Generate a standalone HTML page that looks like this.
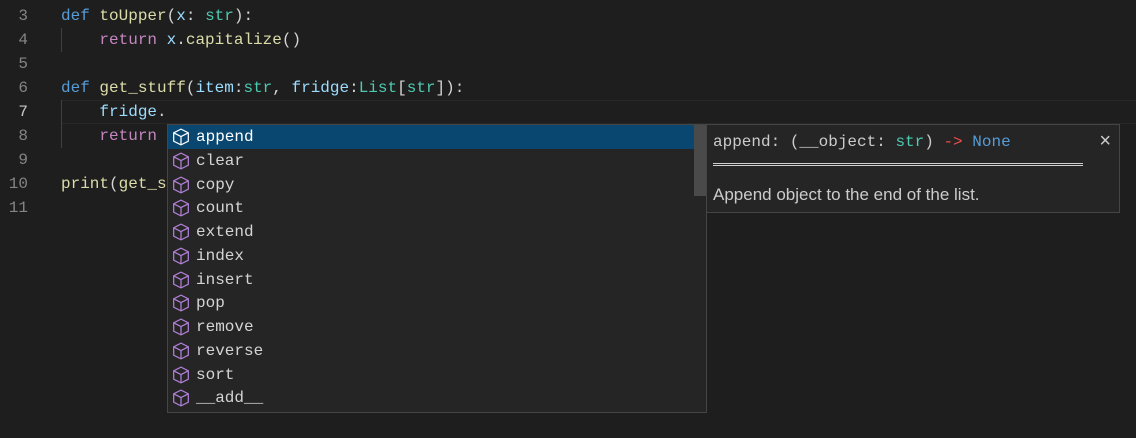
<!DOCTYPE html>
<html><head><style>
body{margin:0;width:1136px;height:438px;background:#1e1e1e;overflow:hidden;position:relative;font-family:"Liberation Mono",monospace;font-size:16px;}
.ln{position:absolute;left:0;width:28px;text-align:right;color:#858585;line-height:24px;}
.cl{position:absolute;left:61px;color:#d4d4d4;line-height:24px;white-space:pre;}
.k{color:#569cd6}.f{color:#dcdcaa}.t{color:#4ec9b0}.p{color:#9cdcfe}.r{color:#c586c0}
.guide{position:absolute;left:61px;width:1px;background:#404040}
#cur{position:absolute;left:61px;right:0;top:100px;height:22px;border-top:1px solid #282828;border-bottom:1px solid #282828}
#sug{position:absolute;left:167px;top:124px;width:538px;height:287px;background:#252526;border:1px solid #454545}
.it{position:absolute;left:0;width:538px;height:24px;line-height:24px;color:#d4d4d4}
.it svg{position:absolute;left:4px;top:3px}
.it span{position:absolute;left:28px}
.sel{background:#094771;color:#fff}
#sb{position:absolute;left:526px;top:0;width:12px;height:71px;background:#4a4a4a}
#det{position:absolute;left:707px;top:124px;width:412px;height:87px;background:#252526;border:1px solid #454545;border-left:none}
</style></head><body>
<div id="cur"></div>
<div class="guide" style="top:28px;height:24px"></div>
<div class="guide" style="top:100px;height:48px"></div>
<div class="ln" style="top:4px">3</div>
<div class="ln" style="top:28px">4</div>
<div class="ln" style="top:52px">5</div>
<div class="ln" style="top:76px">6</div>
<div class="ln" style="top:100px;color:#c6c6c6">7</div>
<div class="ln" style="top:124px">8</div>
<div class="ln" style="top:148px">9</div>
<div class="ln" style="top:172px">10</div>
<div class="ln" style="top:196px">11</div>
<div class="cl" style="top:4px"><span class="k">def</span> <span class="f">toUpper</span>(<span class="p">x</span>: <span class="t">str</span>):</div>
<div class="cl" style="top:28px">    <span class="r">return</span> <span class="p">x</span>.<span class="f">capitalize</span>()</div>
<div class="cl" style="top:76px"><span class="k">def</span> <span class="f">get_stuff</span>(<span class="p">item</span>:<span class="t">str</span>, <span class="p">fridge</span>:<span class="t">List</span>[<span class="t">str</span>]):</div>
<div class="cl" style="top:100px">    <span class="p">fridge</span>.</div>
<div class="cl" style="top:124px">    <span class="r">return</span></div>
<div class="cl" style="top:172px"><span class="f">print</span>(<span class="f">get_s</span></div>
<div id="sug">
<div id="sb"></div>
</div>
<div id="det">
<div style="position:absolute;left:6px;top:6px;color:#cccccc;line-height:22px;white-space:pre">append: (__object: <span class="t">str</span>) <span style="color:#f14c4c">-&gt;</span> <span class="k">None</span></div>
<div style="position:absolute;right:8px;top:5px;color:#cccccc;font-family:'Liberation Sans',sans-serif;font-size:20px;line-height:22px">×</div>
<div style="position:absolute;left:6px;top:38px;width:370px;height:1px;border-top:1px solid #cfcfcf;border-bottom:1px solid #cfcfcf"></div>
<div style="position:absolute;left:6px;top:58px;color:#cccccc;font-family:'Liberation Sans',sans-serif;font-size:17px;line-height:24px">Append object to the end of the list.</div>
</div>
<script>
var n=["append","clear","copy","count","extend","index","insert","pop","remove","reverse","sort","__add__"];
var s=document.getElementById('sug'),h='';
n.forEach(function(w,i){var c=i==0?'#ffffff':'#b180d7';
h+='<div class="it'+(i==0?' sel':'')+'" style="top:'+(i*23.75)+'px;'+(i==0?'width:526px':'')+'"><svg width="18" height="18" viewBox="0 0 16 16" fill="none" stroke="'+c+'" stroke-width="1.1" stroke-linejoin="round"><path d="M8 1L14.5 4.3V11.7L8 15L1.5 11.7V4.3Z"/><path d="M1.5 4.3L8 7.6L14.5 4.3M8 7.6V15"/></svg><span>'+w+'</span></div>';});
s.innerHTML=h+s.innerHTML;
</script>
</body></html>
